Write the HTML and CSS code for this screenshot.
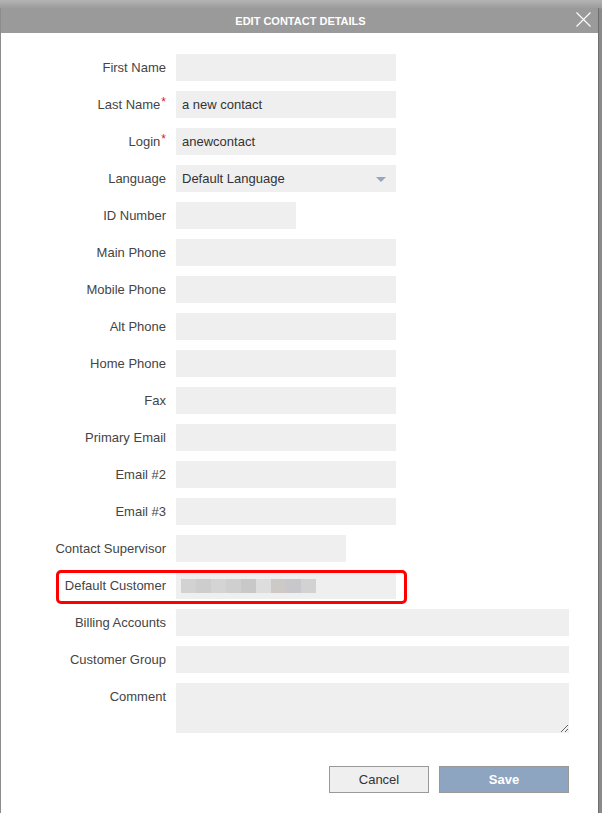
FILE: index.html
```html
<!DOCTYPE html>
<html lang="en">
<head>
    <meta charset="UTF-8">
    <title>Edit Contact Details</title>
    <link rel="stylesheet" href="styles.css">
</head>
<body>
    <div class="modal">
        <div class="modal-header">
            <span class="modal-title">Edit Contact Details</span>
            <svg class="close" width="15" height="15" viewBox="0 0 15 15">
                <path d="M0.5 0.5 L14.5 14.5 M14.5 0.5 L0.5 14.5" stroke="#fff" stroke-width="1.1" fill="none"/>
            </svg>
        </div>

        <form class="contact-form">
            <div class="row">
                <label>First Name</label>
                <input type="text" class="medium">
            </div>
            <div class="row">
                <label>Last Name<span class="req">*</span></label>
                <input type="text" class="medium" value="a new contact">
            </div>
            <div class="row">
                <label>Login<span class="req">*</span></label>
                <input type="text" class="medium" value="anewcontact">
            </div>
            <div class="row">
                <label>Language</label>
                <div class="select medium">
                    <span>Default Language</span>
                    <i class="caret"></i>
                </div>
            </div>
            <div class="row">
                <label>ID Number</label>
                <input type="text" class="short">
            </div>
            <div class="row">
                <label>Main Phone</label>
                <input type="text" class="medium">
            </div>
            <div class="row">
                <label>Mobile Phone</label>
                <input type="text" class="medium">
            </div>
            <div class="row">
                <label>Alt Phone</label>
                <input type="text" class="medium">
            </div>
            <div class="row">
                <label>Home Phone</label>
                <input type="text" class="medium">
            </div>
            <div class="row">
                <label>Fax</label>
                <input type="text" class="medium">
            </div>
            <div class="row">
                <label>Primary Email</label>
                <input type="text" class="medium">
            </div>
            <div class="row">
                <label>Email #2</label>
                <input type="text" class="medium">
            </div>
            <div class="row">
                <label>Email #3</label>
                <input type="text" class="medium">
            </div>
            <div class="row">
                <label>Contact Supervisor</label>
                <input type="text" class="half">
            </div>
            <div class="row marked">
                <label>Default Customer</label>
                <div class="field medium">
                    <span class="blurred"></span>
                </div>
                <div class="highlight"></div>
            </div>
            <div class="row">
                <label>Billing Accounts</label>
                <input type="text" class="wide">
            </div>
            <div class="row">
                <label>Customer Group</label>
                <input type="text" class="wide">
            </div>
            <div class="row top">
                <label>Comment</label>
                <textarea class="wide"></textarea>
            </div>

            <div class="actions">
                <button type="button" class="btn cancel">Cancel</button>
                <button type="button" class="btn save">Save</button>
            </div>
        </form>
    </div>
</body>
</html>
```

FILE: styles.css
```css
body {
    margin: 0;
    background: linear-gradient(to bottom, #b4b4b4, #9c9c9c 8px, #8a8a8a 9px);
    font-family: 'Liberation Sans', Arial, sans-serif;
    font-size: 13px;
    color: #444;
    height: 813px;
    overflow: hidden;
}

.modal {
    margin-top: 8px;
    width: 599px;
    box-sizing: border-box;
    height: 805px;
    background: #fff;
    border-left: 1px solid #8c8c8c;
    border-right: 1px solid #6e6e6e;
}

.modal-header {
    position: relative;
    height: 25px;
    background: #9a9a9a;
    display: flex;
    align-items: center;
    justify-content: center;
}

.modal-title {
    color: #fff;
    font-size: 11px;
    font-weight: bold;
    text-transform: uppercase;
    margin-left: 2px;
}

.close {
    position: absolute;
    right: 7px;
    top: 4px;
}

.contact-form {
    padding: 21px 0 0 0;
    display: flex;
    flex-direction: column;
    gap: 10px;
}

.row {
    display: flex;
    align-items: center;
    gap: 10px;
    height: 27px;
}

.row.top {
    align-items: flex-start;
    height: 50px;
}

.row.top label {
    padding-top: 6px;
}

.row label {
    width: 165px;
    text-align: right;
    flex-shrink: 0;
    line-height: 15px;
}

.req {
    position: relative;
    top: -3px;
    color: #e02020;
    font-size: 12px;
    line-height: 0;
    margin-left: 1px;
}

input, textarea, .select, .field {
    box-sizing: border-box;
    height: 27px;
    border: none;
    background: #efefef;
    font-family: inherit;
    font-size: 13px;
    color: #333;
    padding: 0 6px;
    margin: 0;
    outline: none;
}

textarea {
    height: 50px;
    resize: vertical;
}

.short { width: 120px; }
.half { width: 170px; }
.medium { width: 220px; }
.wide { width: 393px; }

.select {
    display: flex;
    align-items: center;
    justify-content: space-between;
    padding-right: 10px;
}

.caret {
    width: 0;
    height: 0;
    border-left: 5px solid transparent;
    border-right: 5px solid transparent;
    border-top: 5px solid #93a7c2;
    margin-top: 1px;
}

.field {
    display: flex;
    align-items: center;
    padding-left: 5px;
}

.blurred {
    display: block;
    width: 135px;
    height: 14px;
    background: linear-gradient(to right,
        #d2d2d2 0 15px, #cdcdcd 15px 30px, #d4d4d4 30px 45px,
        #cfcfcf 45px 60px, #c8c8c8 60px 75px, #dddddd 75px 90px,
        #cdc9c6 90px 105px, #c8c8cc 105px 120px, #d2d2d2 120px 135px);
}

.marked {
    position: relative;
}

.highlight {
    position: absolute;
    left: 55px;
    top: -2px;
    width: 351px;
    height: 34px;
    box-sizing: border-box;
    border: 3px solid #f00;
    border-radius: 5px;
}

.actions {
    display: flex;
    justify-content: flex-end;
    gap: 10px;
    padding-right: 29px;
    margin-top: 23px;
}

.btn {
    height: 27px;
    font-family: inherit;
    font-size: 13px;
    border: 1px solid #999;
    cursor: pointer;
}

.cancel {
    width: 100px;
    background: #efefef;
    color: #333;
}

.save {
    width: 130px;
    background: #8ea5c1;
    color: #fff;
    font-weight: bold;
}
```
